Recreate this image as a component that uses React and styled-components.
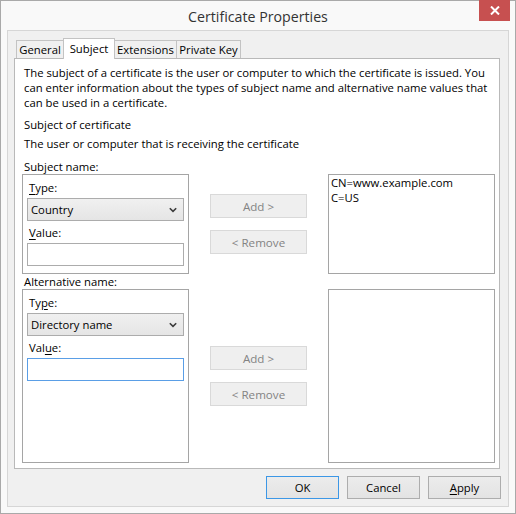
import React from "react";
import styled, { createGlobalStyle } from "styled-components";

const Global = createGlobalStyle`
  html, body { margin: 0; padding: 0; background: #ffffff; }
  * { box-sizing: border-box; }
`;

const FONT = `"Open Sans", "Noto Sans", "DejaVu Sans", sans-serif`;

const Window = styled.div`
  width: 516px;
  height: 514px;
  border: 1px solid #a9a9a9;
  background: #f9f9f9;
  display: flex;
  flex-direction: column;
  font-family: ${FONT};
  font-size: 11.3px;
  color: #000;
`;

const TitleBar = styled.div`
  position: relative;
  height: 29px;
  flex: none;
  display: flex;
  align-items: center;
  justify-content: center;
`;

const Title = styled.div`
  font-size: 14.2px;
  color: #333;
  padding-top: 2px;
`;

const CloseButton = styled.div`
  position: absolute;
  top: -1px;
  right: 5px;
  width: 31px;
  height: 21px;
  background: #c75050;
  display: flex;
  align-items: center;
  justify-content: center;
`;

const Client = styled.div`
  flex: 1;
  margin: 0 6px 6px 6px;
  border: 1px solid #d6d6d6;
  background: #f0f0f0;
  display: flex;
  flex-direction: column;
  padding: 7px 6px 7px 6px;
`;

const TabRow = styled.div`
  display: flex;
  align-items: flex-end;
  height: 21px;
  margin-left: 2px;
  margin-bottom: -1px;
  position: relative;
  z-index: 1;
`;

const Tab = styled.div`
  width: ${(p) => p.$w}px;
  height: ${(p) => (p.$active ? 21 : 18)}px;
  margin-right: -1px;
  margin-bottom: ${(p) => (p.$active ? 0 : 1)}px;
  border: 1px solid #c3c3c3;
  border-bottom: none;
  background: ${(p) => (p.$active ? "#ffffff" : "#f0f0f0")};
  position: relative;
  z-index: ${(p) => (p.$active ? 2 : 1)};
  display: flex;
  align-items: ${(p) => (p.$active ? "flex-start" : "center")};
  padding-top: ${(p) => (p.$active ? 2 : 0)}px;
  justify-content: center;
  line-height: 15px;
  white-space: nowrap;
`;

const Panel = styled.div`
  width: 486px;
  height: 411px;
  border: 1px solid #b9b9b9;
  background: #ffffff;
  padding: 6px 4px 5px 7px;
  display: flex;
  flex-direction: column;
`;

const Text = styled.div`
  line-height: 15px;
  margin-top: ${(p) => p.$mt || 0}px;
  padding-left: 2px;
  white-space: nowrap;
`;

const Section = styled.div`
  display: grid;
  grid-template-columns: 167px 1fr 167px;
  height: ${(p) => p.$h}px;
`;

const GroupBox = styled.div`
  border: 1px solid #a5a5a5;
  padding: 5px 4px 0 4px;
  display: flex;
  flex-direction: column;
`;

const FieldLabel = styled.div`
  line-height: 15px;
  padding-left: 2px;
  margin-bottom: 3px;
  & u { text-decoration: underline; text-underline-offset: 2px; }
`;

const Select = styled.div`
  height: 23px;
  border: 1px solid #acacac;
  background: linear-gradient(#f0f0f0, #e5e5e5);
  display: flex;
  align-items: center;
  justify-content: space-between;
  padding: 0 6px 0 3px;
  margin-bottom: 4px;
  line-height: 15px;
`;

const Input = styled.div`
  height: 23px;
  border: 1px solid ${(p) => (p.$focus ? "#5a9ee6" : "#acacac")};
  background: #fff;
`;

const Middle = styled.div`
  display: flex;
  flex-direction: column;
  align-items: center;
  justify-content: center;
  gap: 12px;
`;

const SideButton = styled.div`
  width: 97px;
  height: 24px;
  border: 1px solid #d9d9d9;
  background: #efefef;
  color: #838383;
  display: flex;
  align-items: center;
  justify-content: center;
  line-height: 15px;
  font-size: 11.6px;
`;

const ListBox = styled.div`
  border: 1px solid #a5a5a5;
  background: #fff;
  padding: 0 2px;
  line-height: 15px;
`;

const Footer = styled.div`
  display: flex;
  justify-content: flex-end;
  gap: 8px;
  margin-top: 7px;
  padding-right: 1px;
`;

const DialogButton = styled.div`
  width: 73px;
  height: 23px;
  border: 1px solid ${(p) => (p.$default ? "#3c97e6" : "#adadad")};
  background: linear-gradient(#ececec, #e3e3e3);
  display: flex;
  align-items: center;
  justify-content: center;
  line-height: 15px;
  & u { text-decoration: underline; text-underline-offset: 2px; }
`;

const Chevron = () => (
  <svg width="8" height="6" viewBox="0 0 8 6">
    <path d="M0.8 1.2 L4 4.4 L7.2 1.2" fill="none" stroke="#3c3c3c" strokeWidth="1.6" />
  </svg>
);

const CloseIcon = () => (
  <svg width="10" height="9" viewBox="0 0 10 9">
    <path d="M1 0.5 L9 8.5 M9 0.5 L1 8.5" stroke="#fff" strokeWidth="2" />
  </svg>
);

function NameSection({ label, height, type, focus, entries, typeLabel, valueLabel, mt }) {
  return (
    <>
      <Text $mt={mt}>{label}</Text>
      <Section $h={height}>
        <GroupBox>
          <FieldLabel>{typeLabel}</FieldLabel>
          <Select>
            <span>{type}</span>
            <Chevron />
          </Select>
          <FieldLabel>{valueLabel}</FieldLabel>
          <Input $focus={focus} />
        </GroupBox>
        <Middle>
          <SideButton>Add &gt;</SideButton>
          <SideButton>&lt; Remove</SideButton>
        </Middle>
        <ListBox>
          {entries.map((e) => (
            <div key={e}>{e}</div>
          ))}
        </ListBox>
      </Section>
    </>
  );
}

export default function App() {
  return (
    <>
      <Global />
      <Window>
        <TitleBar>
          <Title>Certificate Properties</Title>
          <CloseButton>
            <CloseIcon />
          </CloseButton>
        </TitleBar>
        <Client>
          <TabRow>
            <Tab $w={48}>General</Tab>
            <Tab $w={52} $active>Subject</Tab>
            <Tab $w={63}>Extensions</Tab>
            <Tab $w={65}>Private Key</Tab>
          </TabRow>
          <Panel>
            <Text>
              The subject of a certificate is the user or computer to which the certificate is issued. You
              <br />
              can enter information about the types of subject name and alternative name values that
              <br />
              can be used in a certificate.
            </Text>
            <Text $mt={7}>Subject of certificate</Text>
            <Text $mt={4}>The user or computer that is receiving the certificate</Text>
            <NameSection
              mt={8}
              label="Subject name:"
              height={100}
              type="Country"
              typeLabel={<><u>T</u>ype:</>}
              valueLabel={<><u>V</u>alue:</>}
              entries={["CN=www.example.com", "C=US"]}
            />
            <NameSection
              label="Alternative name:"
              height={174}
              type="Directory name"
              focus
              typeLabel={<>Ty<u>p</u>e:</>}
              valueLabel={<>Val<u>u</u>e:</>}
              entries={[]}
            />
          </Panel>
          <Footer>
            <DialogButton $default>OK</DialogButton>
            <DialogButton>Cancel</DialogButton>
            <DialogButton>
              <u>A</u>pply
            </DialogButton>
          </Footer>
        </Client>
      </Window>
    </>
  );
}
